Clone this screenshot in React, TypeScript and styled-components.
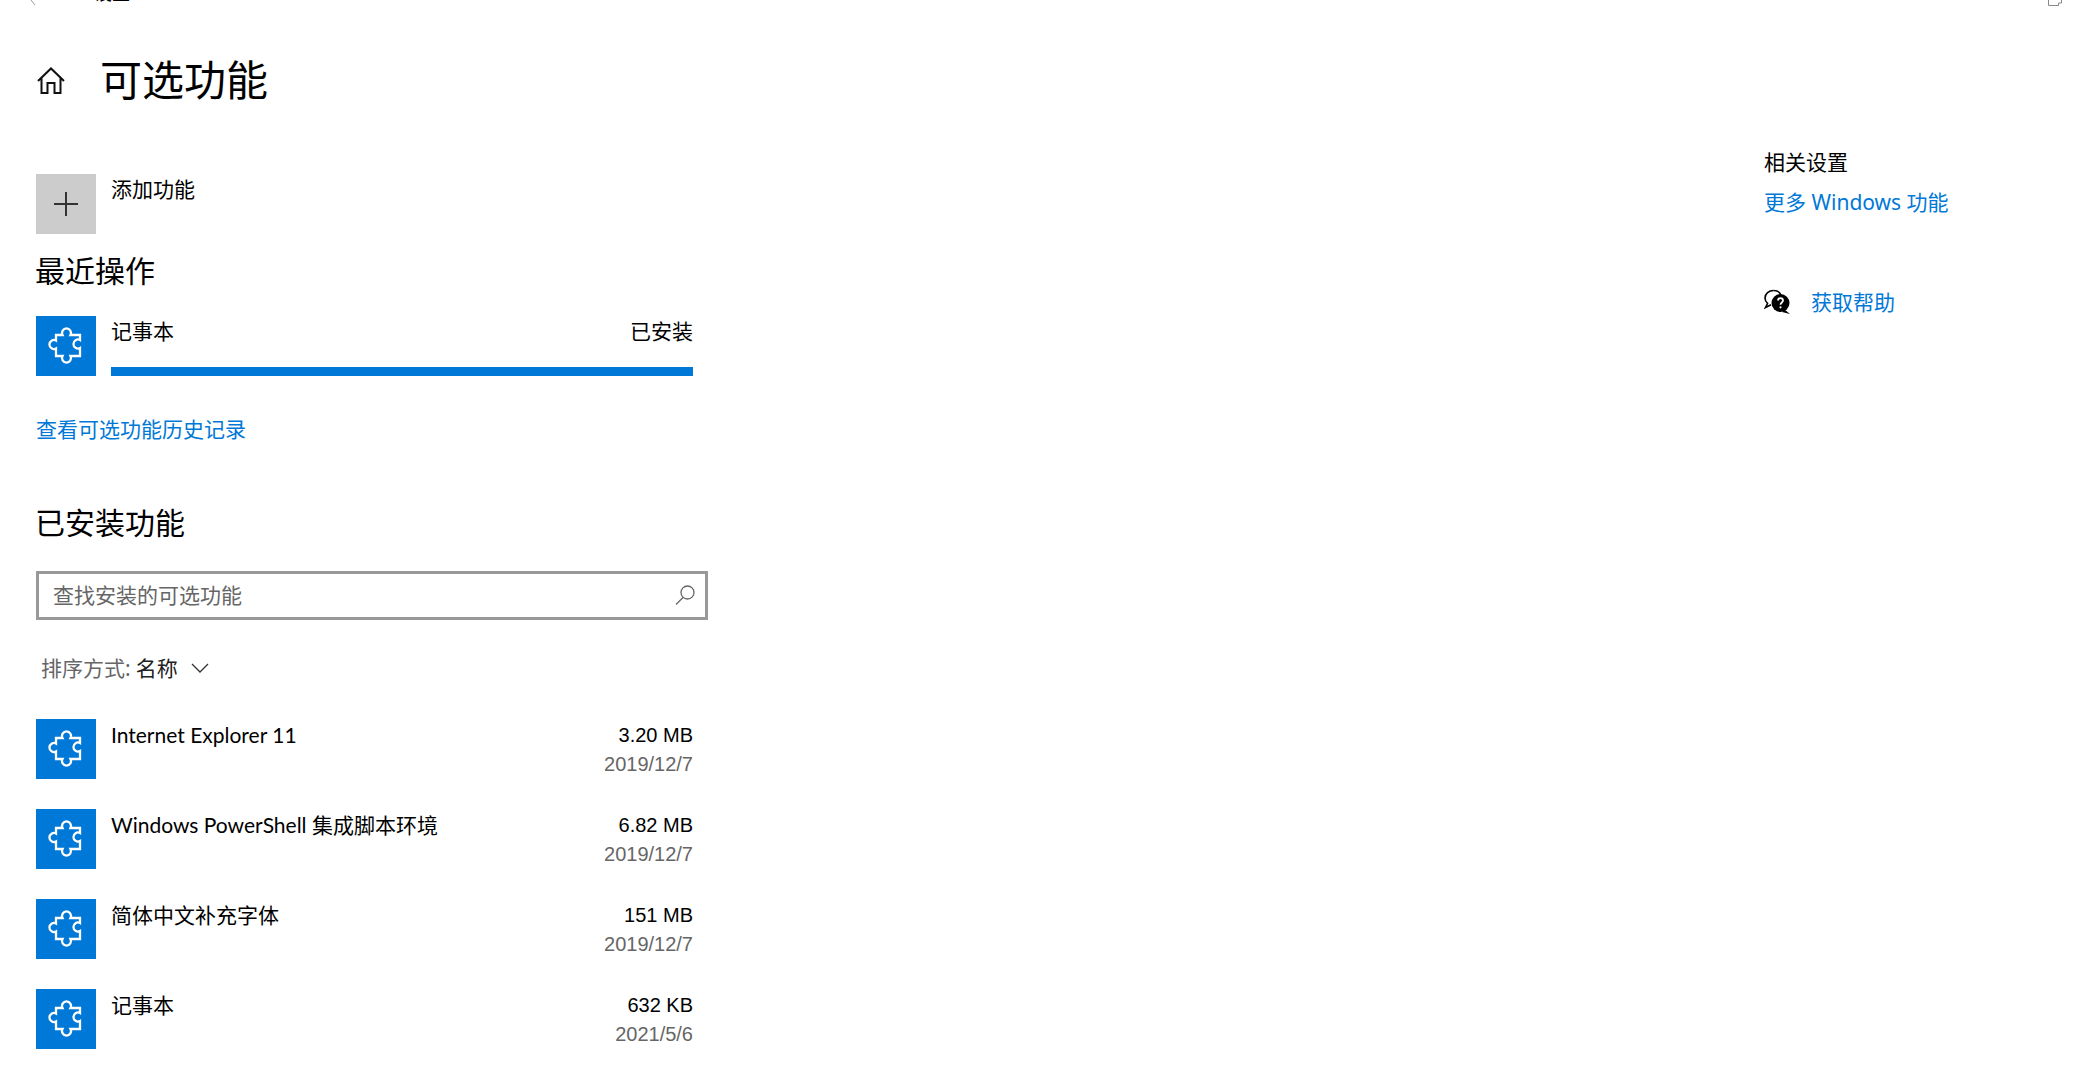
import React from 'react';
import styled, { createGlobalStyle } from 'styled-components';

const GlobalStyle = createGlobalStyle`
  html, body {
    margin: 0;
    background: #fff;
  }
  body {
    font-family: "Noto Sans", "Noto Sans CJK SC", sans-serif;
    font-size: 21px;
    line-height: 30px;
    color: #000;
    overflow: hidden;
  }
`;

const Window = styled.div`
  width: 2081px;
  height: 1089px;
  overflow: hidden;
`;

// Title bar is cut off by the top of the screenshot, only its last pixels show
const TitleBar = styled.div`
  display: flex;
  align-items: flex-end;
  height: 6px;
  padding: 0 19px 0 30px;
  overflow: hidden;
`;

const BarCaption = styled.span`
  margin-left: 58px;
  font-size: 18px;
  line-height: 26px;
  flex: 1;
`;

const Columns = styled.div`
  display: grid;
  grid-template-columns: 1764px 1fr;
`;

const Main = styled.main`
  padding-left: 36px;
  width: 672px;
`;

const Header = styled.header`
  display: flex;
  align-items: center;
  gap: 35px;
  height: 60px;
  margin-top: 45px;
`;

const HomeIcon = styled.svg`
  margin: -2px 0 0 1px;
`;

const PageTitle = styled.h1`
  margin: -2px 0 0;
  font-size: 42px;
  font-weight: 400;
  line-height: 60px;
`;

const AddRow = styled.div`
  display: flex;
  gap: 15px;
  margin-top: 63px;
`;

const Tile = styled.div<{ $muted?: boolean }>`
  display: flex;
  flex: none;
  width: 60px;
  height: 60px;
  align-items: center;
  justify-content: center;
  background: ${p => (p.$muted ? '#ccc' : '#0078d7')};
`;

const SectionTitle = styled.h2<{ $top: number }>`
  margin: ${p => p.$top}px 0 0 -1px;
  font-size: 30px;
  font-weight: 400;
  line-height: 40px;
`;

const RecentRow = styled.div`
  display: flex;
  gap: 15px;
  width: 657px;
  margin-top: 25px;
`;

const RecentBody = styled.div`
  flex: 1;
`;

const RecentLine = styled.div`
  display: flex;
  justify-content: space-between;
`;

const ProgressBar = styled.div`
  height: 9px;
  margin-top: 21px;
  background: #0078d7;
`;

const LinkText = styled.a<{ $top?: number }>`
  display: block;
  margin-top: ${p => p.$top ?? 0}px;
  color: #0078d7;
  text-decoration: none;
`;

const SearchBox = styled.div`
  display: flex;
  align-items: center;
  justify-content: space-between;
  box-sizing: border-box;
  height: 49px;
  margin-top: 28px;
  padding: 0 9px 2px 14px;
  border: 3px solid #999;
  color: #666;
`;

const SortRow = styled.div`
  display: flex;
  align-items: center;
  margin-top: 33px;
  padding-left: 5px;
  color: #666;
`;

const SortValue = styled.span`
  margin-left: 5px;
  color: #222;
`;

const SortChevron = styled.svg`
  margin-left: 13px;
`;

const FeatureList = styled.div`
  display: flex;
  flex-direction: column;
  gap: 30px;
  width: 657px;
  margin-top: 36px;
`;

const FeatureRow = styled.div`
  display: flex;
  gap: 15px;
  line-height: 29px;
`;

const FeatureName = styled.div`
  flex: 1;
  padding-top: 1px;
  font-family: Lato, "Noto Sans CJK SC", sans-serif;
`;

const FeatureMeta = styled.div`
  padding-top: 2px;
  font-family: "Liberation Sans", sans-serif;
  font-size: 20px;
  text-align: right;
`;

const FeatureDate = styled.div`
  color: #666;
`;

const Aside = styled.aside`
  padding-top: 141px;
`;

const AsideTitle = styled.div`
  margin-bottom: 10px;
`;

const HelpRow = styled.div`
  display: flex;
  align-items: center;
  gap: 21px;
  margin-top: 70px;
`;

const PuzzleIcon = () => (
  <svg width="60" height="60" viewBox="0 0 60 60" fill="none" stroke="#fff" strokeWidth="2.3">
    <path d="M20 19H26.500A4.500 4.500 0 1 1 34.500 19H44V24A4.500 4.500 0 1 0 44 32V40H34.500A4.500 4.500 0 1 1 26.500 40H20V32.500A4.500 4.500 0 1 1 20 24.500Z" />
  </svg>
);

const features = [
  { name: 'Internet Explorer 11', size: '3.20 MB', date: '2019/12/7' },
  { name: 'Windows PowerShell 集成脚本环境', size: '6.82 MB', date: '2019/12/7' },
  { name: '简体中文补充字体', size: '151 MB', date: '2019/12/7' },
  { name: '记事本', size: '632 KB', date: '2021/5/6' },
];

const App = () => (
  <Window>
    <GlobalStyle />
    <TitleBar>
      <svg width="6" height="6" viewBox="0 0 6 6" fill="none" stroke="#999" strokeWidth="1">
        <path d="M1 0l4 5" />
      </svg>
      <BarCaption>设置</BarCaption>
      <svg width="14" height="6" viewBox="0 0 14 6" fill="none" stroke="#888" strokeWidth="1">
        <path d="M.5 0v5.5h10V3h3V0" />
      </svg>
    </TitleBar>
    <Columns>
      <Main>
        <Header>
          <HomeIcon width="28" height="27" viewBox="0 0 28 27" fill="none" stroke="#111" strokeWidth="2">
            <path d="M1 14L14 1.500 27 14M4.500 11V26H10.500V16H17.500V26H23.500V11" />
          </HomeIcon>
          <PageTitle>可选功能</PageTitle>
        </Header>
        <AddRow>
          <Tile $muted>
            <svg width="24" height="24" viewBox="0 0 24 24" stroke="#333" strokeWidth="2">
              <path d="M0 12H24M12 0V24" />
            </svg>
          </Tile>
          <div>添加功能</div>
        </AddRow>
        <SectionTitle $top={17}>最近操作</SectionTitle>
        <RecentRow>
          <Tile>
            <PuzzleIcon />
          </Tile>
          <RecentBody>
            <RecentLine>
              <span>记事本</span>
              <span>已安装</span>
            </RecentLine>
            <ProgressBar />
          </RecentBody>
        </RecentRow>
        <LinkText $top={38}>查看可选功能历史记录</LinkText>
        <SectionTitle $top={59}>已安装功能</SectionTitle>
        <SearchBox>
          <span>查找安装的可选功能</span>
          <svg width="22" height="22" viewBox="0 0 22 22" fill="none" stroke="#666" strokeWidth="1.3">
            <circle cx="13.500" cy="8.500" r="6.500" />
            <path d="M9 13.500L2 20.500" />
          </svg>
        </SearchBox>
        <SortRow>
          排序方式:
          <SortValue>名称</SortValue>
          <SortChevron width="18" height="11" viewBox="0 0 18 11" fill="none" stroke="#333" strokeWidth="1.3">
            <path d="M1 1l8 8 8-8" />
          </SortChevron>
        </SortRow>
        <FeatureList>
          {features.map(f => (
            <FeatureRow key={f.name}>
              <Tile>
                <PuzzleIcon />
              </Tile>
              <FeatureName>{f.name}</FeatureName>
              <FeatureMeta>
                <div>{f.size}</div>
                <FeatureDate>{f.date}</FeatureDate>
              </FeatureMeta>
            </FeatureRow>
          ))}
        </FeatureList>
      </Main>
      <Aside>
        <AsideTitle>相关设置</AsideTitle>
        <LinkText>更多 Windows 功能</LinkText>
        <HelpRow>
          <svg width="26" height="26" viewBox="0 0 26 26">
            <path d="M9.500 1.500C5 1.500 1 4.500 1 9c0 2.200 1 4 2.600 5.300L1.500 18.500l5.500-2.700" fill="#fff" stroke="#000" strokeWidth="1.600" />
            <path d="M9.500 1.500c3.500 0 6.300 1.800 7.500 4.500" fill="none" stroke="#000" strokeWidth="1.600" />
            <circle cx="16.500" cy="14" r="9" fill="#000" />
            <path d="M20.500 20.500L26 25l-8-2z" fill="#000" />
            <path d="M14 11.500c0-3.300 5-3.300 5 0 0 2-2.500 2-2.500 4.300" fill="none" stroke="#fff" strokeWidth="1.800" />
            <circle cx="16.500" cy="18.300" r="1.100" fill="#fff" />
          </svg>
          <LinkText>获取帮助</LinkText>
        </HelpRow>
      </Aside>
    </Columns>
  </Window>
);

export default App;
